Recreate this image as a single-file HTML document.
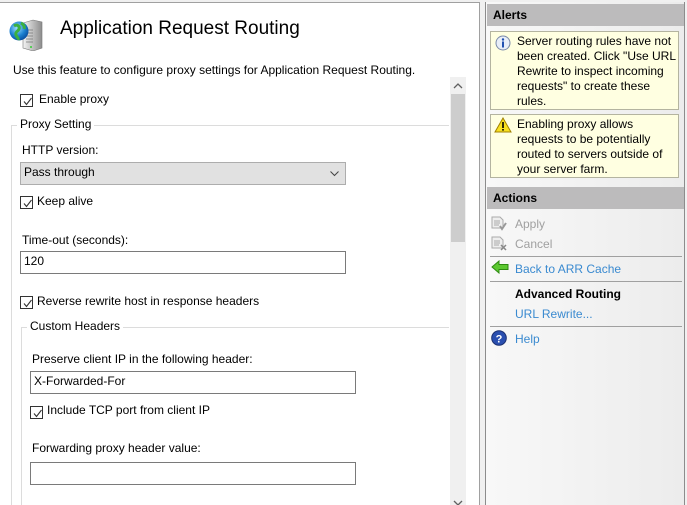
<!DOCTYPE html>
<html><head><style>
*{margin:0;padding:0;box-sizing:border-box}
html,body{width:687px;height:505px;overflow:hidden}
body{background:#f0f0f0;font-family:"Liberation Sans",sans-serif;font-size:12px;color:#000;position:relative}
.a{position:absolute;white-space:nowrap}
#left{position:absolute;left:0;top:2px;width:480px;height:503px;background:#fff;border-top:1px solid #a0a0a0;border-right:1px solid #a0a0a0;overflow:hidden}
.cb{position:absolute;width:13px;height:13px;border:1px solid #333;background:#fff}
.cb svg{position:absolute;left:1px;top:1px}
.inp{position:absolute;border:1px solid #7a7a7a;background:#fff;height:23px;padding:3px 3px;font-size:12px}
.grp{position:absolute;border:1px solid #dcdcdc}
#right{position:absolute;left:485px;top:2px;width:200px;height:503px;border-left:1px solid #8c8c8c;border-right:1px solid #8c8c8c;background:linear-gradient(90deg,#f8f8f8,#ececec);overflow:hidden}
.hdr{position:absolute;left:1px;width:197px;height:22px;background:#bcbbbc;font-weight:bold;font-size:12px;padding:4px 0 0 6px}
.alert{position:absolute;left:4px;width:189px;background:#ffffe1;border:1px solid #b4b4a0;padding:2px 2px 0 26px;line-height:15px;white-space:nowrap;font-size:12px;overflow:hidden}
.act{position:absolute;left:29px;font-size:12px}
.sep{position:absolute;left:4px;width:192px;height:1px;background:#a0a0a0}
</style></head><body>
<div id="left">
  <svg class="a" style="left:9px;top:14px" width="34" height="34" viewBox="0 0 34 34">
    <defs><linearGradient id="s" x1="0" x2="1"><stop offset="0" stop-color="#f4f4f4"/><stop offset="1" stop-color="#8c8c8c"/></linearGradient>
    <radialGradient id="g" cx=".4" cy=".35" r=".7"><stop offset="0" stop-color="#9fe0ff"/><stop offset=".6" stop-color="#1a7fd0"/><stop offset="1" stop-color="#0a4a9a"/></radialGradient></defs>
    <path d="M14 6 L24 3 L33 5 L33 31 L24 34 L14 31Z" fill="url(#s)" stroke="#777" stroke-width=".6"/>
    <path d="M17 13h7M17 16h7M17 19h7M17 22h7M17 25h7" stroke="#777" stroke-width=".8"/>
    <circle cx="22" cy="30" r="1" fill="#3c3"/>
    <circle cx="10" cy="14" r="9.5" fill="url(#g)"/>
    <path d="M5 9c3-2 6 0 5 3s-4 2-3 6c1 3 3 3 2 5M12 6c2 1 4 3 3 6" stroke="#3cb040" stroke-width="3" fill="none"/>
  </svg>
  <div class="a" style="left:60px;top:15px;font-size:19px">Application Request Routing</div>
  <div class="a" style="left:13px;top:60px">Use this feature to configure proxy settings for Application Request Routing.</div>
  <div class="cb" style="left:20px;top:91px"><svg width="11" height="11"><path d="M2 5.5l2.5 3L9.5 2" stroke="#333" fill="none" stroke-width="1.1"/></svg></div>
  <div class="a" style="left:39px;top:89px">Enable proxy</div>
  <div class="grp" style="left:11px;top:122px;width:438px;height:400px;border-right:none;border-bottom:none"></div>
  <div class="a" style="left:17px;top:114px;background:#fff;padding:0 3px">Proxy Setting</div>
  <div class="a" style="left:22px;top:140px">HTTP version:</div>
  <div class="inp" style="left:20px;top:159px;width:326px;background:#e1e1e1;border-color:#adadad;padding-top:2px">Pass through<svg style="position:absolute;right:6px;top:8px" width="9" height="6"><path d="M.5 .5l4 4 4-4" stroke="#444" fill="none"/></svg></div>
  <div class="cb" style="left:20px;top:193px"><svg width="11" height="11"><path d="M2 5.5l2.5 3L9.5 2" stroke="#333" fill="none" stroke-width="1.1"/></svg></div>
  <div class="a" style="left:37px;top:191px">Keep alive</div>
  <div class="a" style="left:22px;top:230px">Time-out (seconds):</div>
  <div class="inp" style="left:20px;top:248px;width:326px;padding-top:2px">120</div>
  <div class="cb" style="left:20px;top:293px"><svg width="11" height="11"><path d="M2 5.5l2.5 3L9.5 2" stroke="#333" fill="none" stroke-width="1.1"/></svg></div>
  <div class="a" style="left:37px;top:291px">Reverse rewrite host in response headers</div>
  <div class="grp" style="left:21px;top:324px;width:428px;height:200px;border-right:none;border-bottom:none"></div>
  <div class="a" style="left:27px;top:316px;background:#fff;padding:0 3px">Custom Headers</div>
  <div class="a" style="left:32px;top:349px">Preserve client IP in the following header:</div>
  <div class="inp" style="left:30px;top:368px;width:326px;padding-top:2px">X-Forwarded-For</div>
  <div class="cb" style="left:30px;top:403px"><svg width="11" height="11"><path d="M2 5.5l2.5 3L9.5 2" stroke="#333" fill="none" stroke-width="1.1"/></svg></div>
  <div class="a" style="left:47px;top:400px">Include TCP port from client IP</div>
  <div class="a" style="left:32px;top:438px">Forwarding proxy header value:</div>
  <div class="inp" style="left:30px;top:459px;width:326px"></div>
  <div class="a" style="left:450px;top:74px;width:16px;height:431px;background:#f0f0f0"></div>
  <div class="a" style="left:451px;top:91px;width:14px;height:148px;background:#cdcdcd"></div>
  <svg class="a" style="left:453px;top:80px" width="10" height="6"><path d="M1 5l4-4 4 4" stroke="#606060" fill="none" stroke-width="1.3"/></svg>
  <svg class="a" style="left:453px;top:497px" width="10" height="6"><path d="M1 1l4 4 4-4" stroke="#606060" fill="none" stroke-width="1.3"/></svg>
</div>
<div id="right">
  <div class="hdr" style="top:2px">Alerts</div>
  <div class="alert" style="top:29px;height:79px">Server routing rules have not<br>been created. Click "Use URL<br>Rewrite to inspect incoming<br>requests" to create these<br>rules.
    <svg style="position:absolute;left:4px;top:3px" width="16" height="16"><circle cx="8" cy="8" r="7" fill="#e8eef8" stroke="#7a8aa8"/><circle cx="8" cy="4.5" r="1.2" fill="#2050b0"/><rect x="7" y="6.5" width="2" height="6" fill="#2050b0"/></svg></div>
  <div class="alert" style="top:112px;height:64px">Enabling proxy allows<br>requests to be potentially<br>routed to servers outside of<br>your server farm.
    <svg style="position:absolute;left:3px;top:2px" width="18" height="16"><path d="M9 1L17 15H1Z" fill="#f8e020" stroke="#a08000"/><rect x="8.2" y="5" width="1.6" height="6" fill="#000"/><rect x="8.2" y="12" width="1.6" height="1.6" fill="#000"/></svg></div>
  <div class="hdr" style="top:185px">Actions</div>
  <svg class="a" style="left:5px;top:214px" width="18" height="16"><path d="M1 1h8l3 3v8H1Z" fill="#eee" stroke="#aaa"/><path d="M3 5h6M3 7h6M3 9h5" stroke="#aaa"/><path d="M9 10l2 3 4-6" stroke="#999" stroke-width="2" fill="none"/></svg>
  <div class="act" style="top:215px;color:#a0a0a0">Apply</div>
  <svg class="a" style="left:5px;top:234px" width="18" height="16"><path d="M1 1h8l3 3v8H1Z" fill="#eee" stroke="#aaa"/><path d="M3 5h6M3 7h6M3 9h5" stroke="#aaa"/><path d="M10 9l5 5M15 9l-5 5" stroke="#888" stroke-width="1.5"/></svg>
  <div class="act" style="top:235px;color:#a0a0a0">Cancel</div>
  <div class="sep" style="top:254px"></div>
  <svg class="a" style="left:5px;top:258px" width="18" height="14"><path d="M1 7L8 1v3.5h9v5H8V13Z" fill="#5cc830" stroke="#2d8a10"/></svg>
  <div class="act" style="top:260px;color:#3a8ad0">Back to ARR Cache</div>
  <div class="sep" style="top:279px"></div>
  <div class="act" style="top:285px;font-weight:bold">Advanced Routing</div>
  <div class="act" style="top:305px;color:#3a8ad0">URL Rewrite...</div>
  <div class="sep" style="top:324px"></div>
  <svg class="a" style="left:5px;top:328px" width="16" height="16"><circle cx="8" cy="8" r="7.3" fill="#2a4fb0" stroke="#1a2f70"/><text x="8" y="12.5" font-size="11" font-weight="bold" fill="#fff" text-anchor="middle" font-family="Liberation Sans">?</text></svg>
  <div class="act" style="top:330px;color:#3a8ad0">Help</div>
</div>
</body></html>
